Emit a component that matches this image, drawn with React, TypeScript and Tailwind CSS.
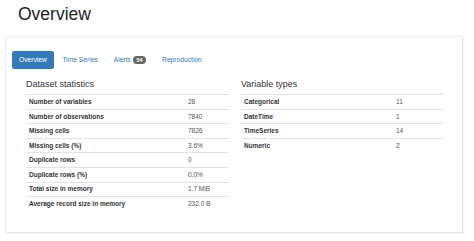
const datasetStats: [string, string][] = [
  ["Number of variables", "28"],
  ["Number of observations", "7840"],
  ["Missing cells", "7826"],
  ["Missing cells (%)", "3.6%"],
  ["Duplicate rows", "0"],
  ["Duplicate rows (%)", "0.0%"],
  ["Total size in memory", "1.7 MiB"],
  ["Average record size in memory", "232.0 B"],
];

const variableTypes: [string, string][] = [
  ["Categorical", "11"],
  ["DateTime", "1"],
  ["TimeSeries", "14"],
  ["Numeric", "2"],
];

function StatTable({
  title,
  rows,
  labelWidth,
}: {
  title: string;
  rows: [string, string][];
  labelWidth: string;
}) {
  return (
    <div className="flex flex-col">
      <h2 className="h-[17px] text-[9px] leading-[17px] font-medium text-[#333]">{title}</h2>
      <div className="mt-[1px] flex flex-col">
        {rows.map(([label, value]) => (
          <div key={label} className="flex h-[14.6px] items-center border-t border-[#e3e3e3] px-[3px] text-[6.5px]">
            <span className={`${labelWidth} shrink-0 font-bold text-[#333]`}>{label}</span>
            <span className="text-[#555]">{value}</span>
          </div>
        ))}
      </div>
    </div>
  );
}

export default function App() {
  const tabs = ["Overview", "Time Series", "Alerts", "Reproduction"];

  return (
    <div className="h-[241px] w-[474px] overflow-hidden bg-white font-['Liberation_Sans',Arial,sans-serif]">
      <h1 className="ml-[18px] mt-[5px] text-[17.5px] leading-[18px] font-normal text-[#222]">Overview</h1>

      <div className="ml-[5px] mt-[13px] h-[197px] w-[458px] border border-[#eeeeee] border-r-[#e6e6e6] border-b-[#e6e6e6] pt-[14px] shadow-[1px_1px_1px_rgba(0,0,0,0.03)]">
        <div className="ml-[6px] flex gap-[1px]">
          {tabs.map((t) => (
            <div
              key={t}
              className={
                t === "Overview"
                  ? "flex h-[18px] items-center rounded-[2px] bg-[#337ab7] px-[7px] text-[6.7px] text-white"
                  : "flex h-[18px] items-center px-[7.5px] text-[6.7px] text-[#337ab7]"
              }
            >
              {t}
              {t === "Alerts" && (
                <span className="ml-[2px] flex h-[8px] items-center rounded-full bg-[#666] px-[3.5px] text-[5.5px] font-bold text-white">
                  54
                </span>
              )}
            </div>
          ))}
        </div>

        <div className="mt-[7px] grid grid-cols-[203px_203px] gap-x-[12px] pl-[20px]">
          <StatTable title="Dataset statistics" rows={datasetStats} labelWidth="w-[159px]" />
          <StatTable title="Variable types" rows={variableTypes} labelWidth="w-[152px]" />
        </div>
      </div>
    </div>
  );
}
